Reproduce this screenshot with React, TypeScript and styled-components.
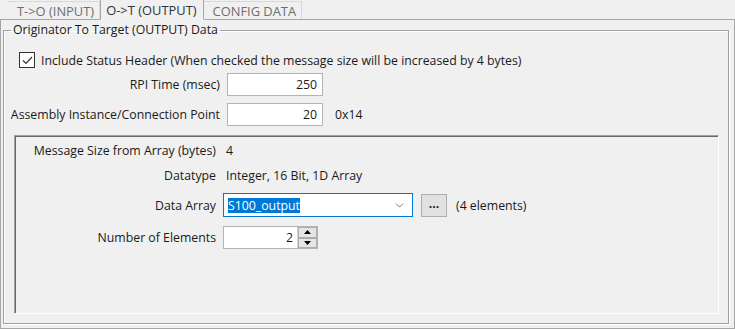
import React, { useState } from 'react';
import styled, { createGlobalStyle } from 'styled-components';
import { ChevronDown } from 'lucide-react';

const GlobalStyle = createGlobalStyle`
  html, body {
    margin: 0;
    padding: 0;
    background: #f0f0f0;
  }
  body {
    font-family: "Open Sans", "Noto Sans", sans-serif;
    font-size: 12.3px;
    color: #1a1a1a;
  }
`;

const Window = styled.div`
  width: 735px;
  height: 329px;
  display: flex;
  flex-direction: column;
  background: #f0f0f0;
  overflow: hidden;
`;

const TabStrip = styled.div`
  display: flex;
  align-items: flex-end;
  height: 20px;
  padding-left: 8px;
  border-bottom: 1px solid #a7a7a7;
  box-sizing: border-box;
`;

const Tab = styled.div<{ $active?: boolean }>`
  height: ${(p) => (p.$active ? '21px' : '18px')};
  margin-bottom: ${(p) => (p.$active ? '-1px' : '0')};
  padding: 0 ${(p) => (p.$active ? '6px' : '5px')} 0 ${(p) => (p.$active ? '5px' : '9px')};
  display: flex;
  align-items: center;
  box-sizing: border-box;
  font-size: 12.9px;
  color: ${(p) => (p.$active ? '#333' : '#6e6e6e')};
  background: #f0f0f0;
  border: 1px solid ${(p) => (p.$active ? '#a7a7a7' : '#d9d9d9')};
  border-bottom: ${(p) => (p.$active ? '1px solid #f0f0f0' : 'none')};
  border-left-width: ${(p) => (p.$active ? '1px' : '0')};
  white-space: nowrap;
`;

const TabPage = styled.div`
  flex: 1;
  border: 1px solid #a7a7a7;
  border-top: none;
  padding: 0 5px 4px 2px;
  display: flex;
`;

const GroupBox = styled.fieldset`
  flex: 1;
  margin: 2px 0 0 0;
  padding: 13px 9px 9px 10px;
  border: 1px solid #a0a0a0;
  box-shadow: inset 1px 1px 0 #fff, 1px 1px 0 #fff;
  display: flex;
  flex-direction: column;
  min-width: 0;
`;

const Legend = styled.legend`
  padding: 0 2px;
  margin-left: -3px;
  color: #1a1a1a;
  line-height: 16px;
`;

const CheckRow = styled.label`
  display: flex;
  align-items: center;
  gap: 6px;
  height: 18px;
  margin: 0 0 0 5px;
`;

const CheckBox = styled.span`
  width: 16px;
  height: 16px;
  box-sizing: border-box;
  border: 1px solid #333;
  background: #fff;
  display: flex;
  align-items: center;
  justify-content: center;
`;

const FormGrid = styled.div<{ $labelWidth: number }>`
  display: grid;
  grid-template-columns: ${(p) => p.$labelWidth}px auto 1fr;
  column-gap: 7px;
  align-items: center;
`;

const OuterRows = styled(FormGrid)`
  grid-auto-rows: 30px;
`;

const Label = styled.span`
  justify-self: end;
  text-align: right;
  white-space: nowrap;
`;

const Value = styled.span`
  padding-left: 3px;
  white-space: nowrap;
`;

const TextBox = styled.div<{ $width: number }>`
  width: ${(p) => p.$width}px;
  height: 23px;
  box-sizing: border-box;
  border: 1px solid #b4b4b4;
  background: #fff;
  display: flex;
  align-items: center;
  justify-content: flex-end;
  padding-right: 5px;
`;

const Extra = styled.span`
  padding-left: 5px;
  white-space: nowrap;
`;

const InnerPanel = styled.div`
  flex: 1;
  margin-top: 6px;
  border-top: 1px solid #a0a0a0;
  border-left: 1px solid #a0a0a0;
  border-right: 1px solid #fff;
  border-bottom: 1px solid #fff;
  box-shadow: inset 1px 1px 0 #696969;
  padding: 2px 0 0 14px;
`;

const InnerRows = styled(FormGrid)`
  grid-template-rows: 25px 25px 34px 31px;
`;

const Combo = styled.div`
  width: 190px;
  height: 24px;
  box-sizing: border-box;
  border: 1px solid #0078d7;
  background: #fff;
  display: flex;
  align-items: center;
  padding: 0 6px 0 4px;
  gap: 4px;
`;

const Selected = styled.span`
  background: #0078d7;
  color: #fff;
  line-height: 15px;
  flex: 1 0 auto;
  max-width: max-content;
`;

const ComboText = styled.div`
  flex: 1;
  display: flex;
`;

const Trailing = styled.div`
  display: flex;
  align-items: center;
  gap: 9px;
  padding-left: 1px;
`;

const Browse = styled.button`
  width: 26px;
  height: 23px;
  box-sizing: border-box;
  border: 1px solid #adadad;
  background: #e1e1e1;
  font: inherit;
  font-weight: 700;
  color: #222;
  padding: 0 0 2px;
  line-height: 1;
`;

const Spinner = styled.div`
  width: 95px;
  height: 23px;
  box-sizing: border-box;
  border: 1px solid #b4b4b4;
  background: #fff;
  display: flex;
`;

const SpinValue = styled.div`
  flex: 1;
  display: flex;
  align-items: center;
  justify-content: flex-end;
  padding-right: 4px;
`;

const SpinButtons = styled.div`
  width: 19px;
  display: flex;
  flex-direction: column;
  background: #f0f0f0;
  border-left: 1px solid #d0d0d0;
`;

const SpinButton = styled.div`
  flex: 1;
  border: 1px solid #adadad;
  background: #e5e5e5;
  display: flex;
  align-items: center;
  justify-content: center;
`;

const Arrow = ({ up }: { up?: boolean }) => (
  <svg width="7" height="4" viewBox="0 0 7 4">
    <polygon points={up ? '0,4 7,4 3.5,0' : '0,0 7,0 3.5,4'} fill="#000" />
  </svg>
);

const App = () => {
  const [checked] = useState(true);

  return (
    <>
      <GlobalStyle />
      <Window>
        <TabStrip>
          <Tab>T-&gt;O (INPUT)</Tab>
          <Tab $active>O-&gt;T (OUTPUT)</Tab>
          <Tab>CONFIG DATA</Tab>
        </TabStrip>
        <TabPage>
          <GroupBox>
            <Legend>Originator To Target (OUTPUT) Data</Legend>
            <CheckRow>
              <CheckBox>
                {checked && (
                  <svg width="11" height="9" viewBox="0 0 11 9">
                    <polyline points="1,4.5 4,7.5 10,1" fill="none" stroke="#333" strokeWidth="1.2" />
                  </svg>
                )}
              </CheckBox>
              Include Status Header (When checked the message size will be increased by 4 bytes)
            </CheckRow>
            <OuterRows $labelWidth={206}>
              <Label>RPI Time (msec)</Label>
              <TextBox $width={96}>250</TextBox>
              <span />
              <Label>Assembly Instance/Connection Point</Label>
              <TextBox $width={96}>20</TextBox>
              <Extra>0x14</Extra>
            </OuterRows>
            <InnerPanel>
              <InnerRows $labelWidth={187}>
                <Label>Message Size from Array (bytes)</Label>
                <Value>4</Value>
                <span />
                <Label>Datatype</Label>
                <Value>Integer, 16 Bit, 1D Array</Value>
                <span />
                <Label>Data Array</Label>
                <Combo>
                  <ComboText>
                    <Selected>S100_output</Selected>
                  </ComboText>
                  <ChevronDown size={13} strokeWidth={1.2} color="#333" />
                </Combo>
                <Trailing>
                  <Browse>...</Browse>
                  <span>(4 elements)</span>
                </Trailing>
                <Label>Number of Elements</Label>
                <Spinner>
                  <SpinValue>2</SpinValue>
                  <SpinButtons>
                    <SpinButton>
                      <Arrow up />
                    </SpinButton>
                    <SpinButton>
                      <Arrow />
                    </SpinButton>
                  </SpinButtons>
                </Spinner>
                <span />
              </InnerRows>
            </InnerPanel>
          </GroupBox>
        </TabPage>
      </Window>
    </>
  );
};

export default App;
